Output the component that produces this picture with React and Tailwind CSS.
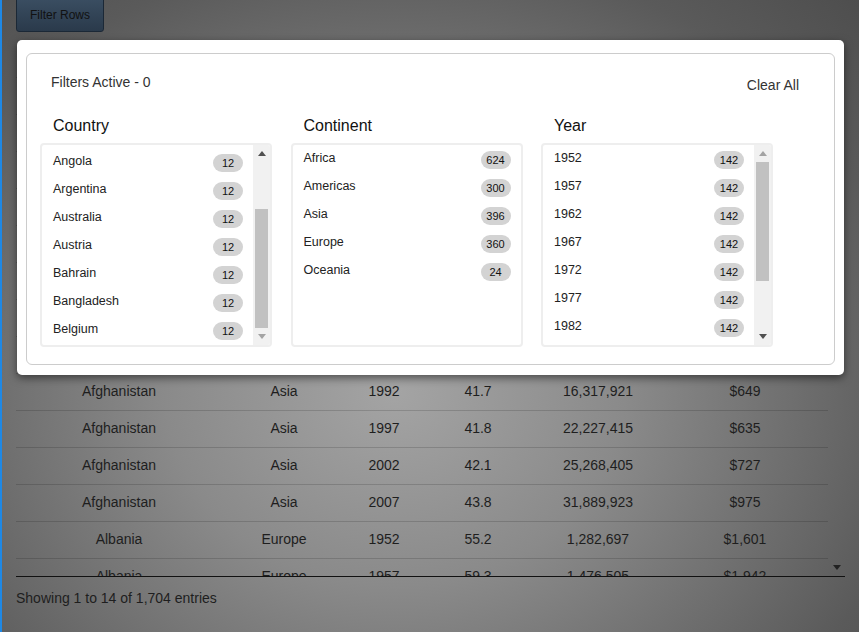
import React from 'react';

// data shown in the table behind the dialog
const rows = [
  ['Afghanistan', 'Asia', 1952, '28.8', '8,425,333', '$779'],
  ['Afghanistan', 'Asia', 1957, '30.3', '9,240,934', '$821'],
  ['Afghanistan', 'Asia', 1962, '32.0', '10,267,083', '$853'],
  ['Afghanistan', 'Asia', 1967, '34.0', '11,537,966', '$836'],
  ['Afghanistan', 'Asia', 1972, '36.1', '13,079,460', '$740'],
  ['Afghanistan', 'Asia', 1977, '38.4', '14,880,372', '$786'],
  ['Afghanistan', 'Asia', 1982, '39.9', '12,881,816', '$978'],
  ['Afghanistan', 'Asia', 1987, '40.8', '13,867,957', '$852'],
  ['Afghanistan', 'Asia', 1992, '41.7', '16,317,921', '$649'],
  ['Afghanistan', 'Asia', 1997, '41.8', '22,227,415', '$635'],
  ['Afghanistan', 'Asia', 2002, '42.1', '25,268,405', '$727'],
  ['Afghanistan', 'Asia', 2007, '43.8', '31,889,923', '$975'],
  ['Albania', 'Europe', 1952, '55.2', '1,282,697', '$1,601'],
  ['Albania', 'Europe', 1957, '59.3', '1,476,505', '$1,942'],
];

const colWidths = ['w-[206px]', 'w-[124px]', 'w-[76px]', 'w-[112px]', 'w-[128px]', 'w-[166px]'];

const countries = ['Angola', 'Argentina', 'Australia', 'Austria', 'Bahrain', 'Bangladesh', 'Belgium'];
const continents = [['Africa', 624], ['Americas', 300], ['Asia', 396], ['Europe', 360], ['Oceania', 24]];
const years = [1952, 1957, 1962, 1967, 1972, 1977, 1982];

function Arrow({ up, dark }) {
  return (
    <svg width="8" height="5" viewBox="0 0 8 5" className="block">
      <path d={up ? 'M0 5 L4 0 L8 5 Z' : 'M0 0 L8 0 L4 5 Z'} fill={dark ? '#505050' : '#a3a3a3'} />
    </svg>
  );
}

// fake classic scrollbar, thumbAt = 'top' | 'bottom'
function Scrollbar({ thumbAt }) {
  return (
    <div className="w-[17px] shrink-0 bg-[#f1f1f1] flex flex-col">
      <div className="h-[17px] flex items-center justify-center">
        <Arrow up dark={thumbAt !== 'top'} />
      </div>
      <div className={`flex-1 flex flex-col ${thumbAt === 'top' ? 'justify-start' : 'justify-end'}`}>
        <div className="h-[119px] mx-[2px] bg-[#c1c1c1]" />
      </div>
      <div className="h-[17px] flex items-center justify-center">
        <Arrow dark={thumbAt === 'top'} />
      </div>
    </div>
  );
}

function Item({ label, count }) {
  return (
    <div className="h-[28px] flex items-center justify-between">
      <span className="text-[12.5px] leading-[15px] text-[#222] mb-[2px]">{label}</span>
      <span className="w-[30px] h-[18px] mt-[2px] rounded-full bg-[#d3d3d3] text-[11px] leading-[18px] text-center text-[#111]">
        {count}
      </span>
    </div>
  );
}

function FilterColumn({ title, children, scroll, padTop }) {
  return (
    <div className="w-[232px]">
      <h3 className="pl-[13px] text-[16px] leading-[20px] text-[#111] mt-[2px] mb-[7px]">{title}</h3>
      <div className="h-[204px] border-2 border-[#eeeeee] rounded-[4px] flex overflow-hidden bg-white">
        <div className={`flex-1 pl-[11px] pr-[10px] ${padTop ? 'pt-[3px]' : ''}`}>{children}</div>
        {scroll && <Scrollbar thumbAt={scroll} />}
      </div>
    </div>
  );
}

export default function App() {
  return (
    <div className="relative w-[859px] h-[632px] overflow-hidden flex font-[family-name:Liberation_Sans,Arial,sans-serif] bg-[radial-gradient(ellipse_at_46%_62%,#a4a4a4_0%,#8a8a8a_35%,#5a5a5a_80%,#4e4e4e_100%)]">
      <div className="w-[2px] shrink-0 bg-[#1e88e5]" />

      {/* page behind the dialog */}
      <div className="pl-[14px] flex flex-col">
        <button className="mt-[-4px] h-[36px] w-[88px] rounded-[3px] border border-[#1b2836] bg-gradient-to-b from-[#3b4f63] to-[#2a3a4b] text-[12px] text-[#111] pt-[2px]">
          Filter Rows
        </button>

        <div className="mt-[8px] w-[829px] h-[537px] border-b border-[#111] flex overflow-hidden">
          <div className="w-[812px] text-[14px] text-[#1e1e1e]">
            <div className="h-[38px] flex items-center font-bold border-b border-black/15">
              {['Country', 'Continent', 'Year', 'LifeExp', 'Pop', 'GdpPercap'].map((h, i) => (
                <div key={h} className={`${colWidths[i]} text-center`}>{h}</div>
              ))}
            </div>
            {rows.map((r, idx) => (
              <div key={idx} className="h-[37px] flex items-center border-b border-black/15 pb-[1px]">
                {r.map((c, i) => (
                  <div key={i} className={`${colWidths[i]} text-center`}>{c}</div>
                ))}
              </div>
            ))}
          </div>
          <div className="w-[17px] flex flex-col justify-end">
            <div className="h-[17px] flex items-center justify-center">
              <svg width="8" height="5" viewBox="0 0 8 5"><path d="M0 0 L8 0 L4 5 Z" fill="#222" /></svg>
            </div>
          </div>
        </div>

        <p className="mt-[11px] text-[14px] leading-[20px] text-[#1e1e1e]">Showing 1 to 14 of 1,704 entries</p>
      </div>

      {/* dialog */}
      <div className="absolute left-[17px] top-[40px] w-[827px] bg-white rounded-[5px] shadow-[0_3px_9px_rgba(0,0,0,0.5)] pt-[13px] px-[9px] pb-[10px]">
        <div className="border border-[#cccccc] rounded-[6px] pb-[17px]">
          <div className="flex justify-between items-start pl-[24px] pr-[35px]">
            <span className="mt-[20px] text-[14px] leading-[16px] text-[#333]">Filters Active - 0</span>
            <button className="mt-[23px] text-[14px] leading-[16px] text-[#333]">Clear All</button>
          </div>
          <div className="mt-[21px] ml-[13px] flex gap-[18.5px]">
            <FilterColumn title="Country" scroll="bottom" padTop>
              {countries.map((c) => <Item key={c} label={c} count={12} />)}
            </FilterColumn>
            <FilterColumn title="Continent">
              {continents.map(([c, n]) => <Item key={c} label={c} count={n} />)}
            </FilterColumn>
            <FilterColumn title="Year" scroll="top">
              {years.map((y) => <Item key={y} label={y} count={142} />)}
            </FilterColumn>
          </div>
        </div>
      </div>
    </div>
  );
}
